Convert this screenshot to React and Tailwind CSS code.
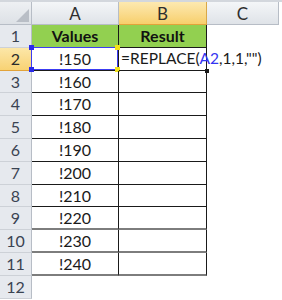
import React from "react";

const values = ["!150", "!160", "!170", "!180", "!190", "!200", "!210", "!220", "!230", "!240"];
const heights = [
  "h-[23px]", "h-[23px]", "h-[22px]", "h-[23px]", "h-[23px]", "h-[23px]",
  "h-[23px]", "h-[22px]", "h-[23px]", "h-[23px]", "h-[23px]", "h-[23px]",
];

function RowHeader({ n, active }) {
  return (
    <div
      className={
        active
          ? "w-[32px] shrink-0 flex items-center justify-center border-r border-b border-r-[#e2a33a] border-b-[#e2a33a] bg-gradient-to-b from-[#fce7a8] to-[#f8d273] text-[#2b2b2b] text-[16px]"
          : "w-[32px] shrink-0 flex items-center justify-center border-r border-b border-r-[#b7bdc6] border-b-[#cdd1d7] bg-[#e6e9ee] text-[#3a4352] text-[16px]"
      }
    >
      {n}
    </div>
  );
}

export default function App() {
  return (
    <div className="w-[282px] h-[300px] bg-white overflow-hidden text-[16px] leading-none font-['Lato','Open_Sans',sans-serif]">
      {/* Column header row */}
      <div className="flex h-[25px] border-t-2 border-t-[#d3d7dd]">
        <div className="relative w-[32px] shrink-0 bg-gradient-to-b from-[#eef0f3] to-[#dde1e6] border-r border-b border-[#b7bdc6]">
          <div className="absolute right-[2px] bottom-[2px] w-0 h-0 border-l-[13px] border-l-transparent border-b-[13px] border-b-[#b9bec6]" />
        </div>
        <div className="w-[87px] shrink-0 flex items-center justify-center bg-gradient-to-b from-[#f4f6f8] to-[#dfe3e8] border-r border-b border-[#b7bdc6] text-[#2e2e2e] text-[17px]">
          A
        </div>
        <div className="w-[88px] shrink-0 flex items-center justify-center bg-gradient-to-b from-[#fde9b0] to-[#f7cf6b] border-r border-b border-r-[#d9a848] border-b-[#e2a33a] text-[#2e2e2e] text-[17px]">
          B
        </div>
        <div className="w-[72px] shrink-0 flex items-center justify-center bg-gradient-to-b from-[#f4f6f8] to-[#dfe3e8] border-r border-b border-[#b7bdc6] text-[#2e2e2e] text-[17px]">
          C
        </div>
        <div className="flex-1" />
      </div>

      {/* Row 1 */}
      <div className={"flex " + heights[0]}>
        <RowHeader n={1} />
        <div className="w-[87px] shrink-0 flex items-center justify-center bg-[#92d050] border-r border-b border-[#1a1a1a] font-bold text-[#111]">
          Values
        </div>
        <div className="w-[88px] shrink-0 flex items-center justify-center bg-[#92d050] border-r border-b border-[#1a1a1a] font-bold text-[#111]">
          Result
        </div>
        <div className="w-[72px] shrink-0" />
        <div className="flex-1" />
      </div>

      {/* Rows 2-11 */}
      {values.map((v, i) => {
        const r = i + 2;
        const gray = r === 9 || r === 10 || r === 11;
        const cellBorder = gray
          ? "border-r border-b-2 border-r-[#1a1a1a] border-b-[#7d7d7d]"
          : "border-r border-b border-[#1a1a1a]";
        return (
          <div key={r} className={"flex " + heights[r - 1]}>
            <RowHeader n={r} active={r === 2} />
            <div className={"relative w-[87px] shrink-0 flex items-center justify-center text-[#1a1a1a] " + cellBorder}>
              {v}
              {r === 2 && (
                <div className="absolute -left-[1px] -top-[1px] right-0 bottom-0 border-[1.5px] border-[#3c3cf2]">
                  <div className="absolute -left-[3px] -top-[3px] w-[5px] h-[5px] bg-[#2a2ae8]" />
                  <div className="absolute -left-[3px] -bottom-[3px] w-[5px] h-[5px] bg-[#2a2ae8]" />
                  <div className="absolute -right-[3px] -top-[3px] w-[5px] h-[5px] bg-[#f2e21a]" />
                  <div className="absolute -right-[3px] -bottom-[3px] w-[5px] h-[5px] bg-[#f2e21a]" />
                </div>
              )}
            </div>
            <div className={"relative w-[88px] shrink-0 flex items-center " + cellBorder}>
              {r === 2 && (
                <>
                  <span className="absolute left-[2px] whitespace-nowrap text-[#1a1a1a] text-[15.5px]">
                    =REPLACE(<span className="text-[#3535f0]">A2</span>,1,1,"")
                  </span>
                  <div className="absolute -right-[3px] -bottom-[3px] w-[4px] h-[4px] bg-[#1a1a1a]" />
                </>
              )}
            </div>
            <div className="w-[72px] shrink-0" />
            <div className="flex-1" />
          </div>
        );
      })}

      {/* Row 12 */}
      <div className={"flex " + heights[11]}>
        <RowHeader n={12} />
        <div className="flex-1" />
      </div>
    </div>
  );
}
